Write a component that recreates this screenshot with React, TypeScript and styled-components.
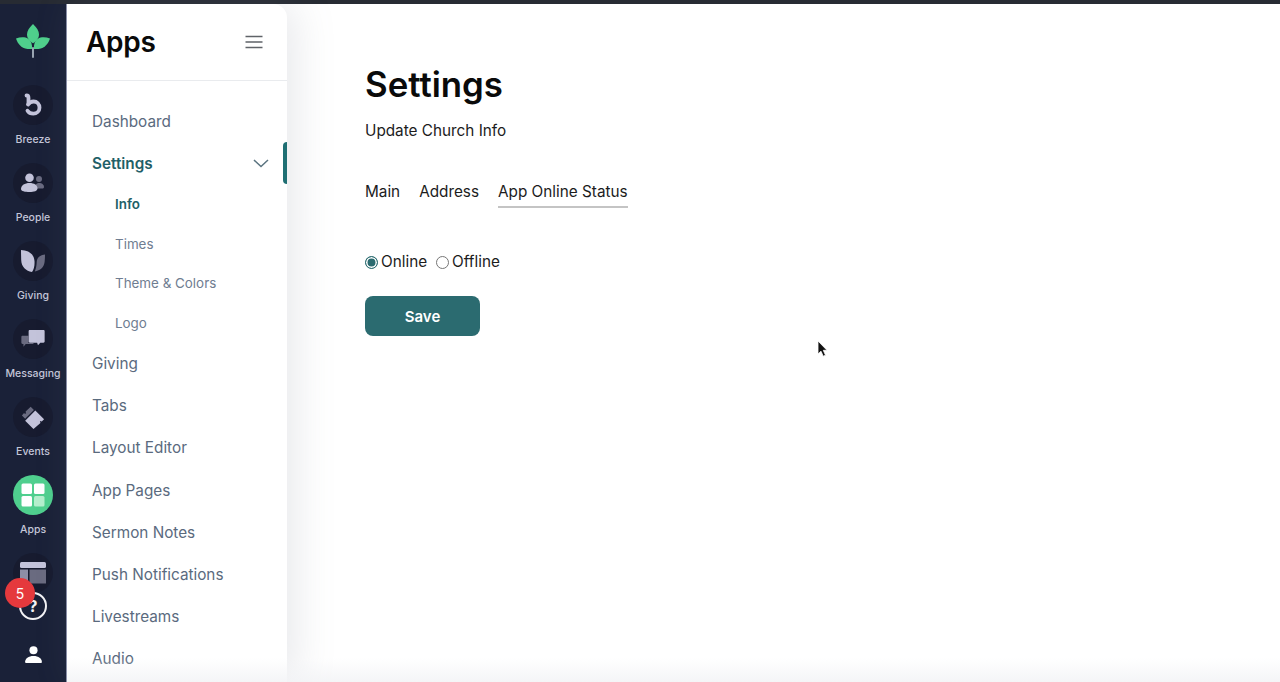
import React from "react";
import styled, { createGlobalStyle } from "styled-components";

const GlobalStyle = createGlobalStyle`
  html, body, #root {
    margin: 0;
    padding: 0;
    height: 100%;
  }
  body {
    font-family: Inter, "Liberation Sans", sans-serif;
    background: #ffffff;
    overflow: hidden;
  }
`;

const railItems = [
  { label: "Breeze", icon: "breeze" },
  { label: "People", icon: "people" },
  { label: "Giving", icon: "giving" },
  { label: "Messaging", icon: "messaging" },
  { label: "Events", icon: "events" },
  { label: "Apps", icon: "apps", active: true },
];

const navTop = ["Dashboard"];
const navSub = ["Info", "Times", "Theme & Colors", "Logo"];
const navRest = ["Giving", "Tabs", "Layout Editor", "App Pages", "Sermon Notes", "Push Notifications", "Livestreams", "Audio"];

const RailIcon = ({ name }: { name: string }) => {
  switch (name) {
    case "breeze":
      return (
        <svg width="24" height="26" viewBox="0 0 24 26" fill="none">
          <path d="M5.500 3.500C7 3.500 7.500 4.500 7.500 6v5" stroke="#c3c3da" strokeWidth="3.800" strokeLinecap="round" />
          <path d="M7 12.500c1.500-2 3.500-3 5.500-3 3.500 0 6 2.800 6 6.200s-2.800 6-6.200 6c-2.500 0-4.500-1-5.800-3" stroke="#c3c3da" strokeWidth="3.800" strokeLinecap="round" />
        </svg>
      );
    case "people":
      return (
        <svg width="24" height="20" viewBox="0 0 24 20">
          <circle cx="18" cy="6" r="3" fill="#6a6b80" />
          <path d="M13 15c.5-3.500 3-5 5.200-5 2.400 0 4.800 1.500 4.800 4 0 1-1 1.500-2 1.500h-8z" fill="#6a6b80" />
          <circle cx="8.500" cy="4.800" r="4.300" fill="#c3c3da" />
          <path d="M0 16c0-3.800 3.800-6 8.500-6s8 2.200 8 5.500c0 2.500-3.500 3.500-8 3.500S0 18.200 0 16z" fill="#c3c3da" />
        </svg>
      );
    case "giving":
      return (
        <svg width="24" height="24" viewBox="0 0 24 24">
          <path d="M0 1c7 .3 13 3.500 13.500 11 .3 5-.6 8.500-2.500 11C5 22 .4 18 .2 11 .1 7 0 4 0 1z" fill="#c3c3da" />
          <path d="M24 5.500c-5 .5-8 3-8.300 7.500-.2 3.500-.5 6-1.900 9.500 5.500-1 9-4 9.800-9.500.3-2.500.4-5 .4-7.500z" fill="#6a6b80" />
        </svg>
      );
    case "messaging":
      return (
        <svg width="24" height="20" viewBox="0 0 26 22">
          <path d="M1.500 7.500H8v8h6l-1 1H5l-2.500 3v-3H1.500c-.8 0-1.300-.5-1.300-1.300V8.800c0-.8.5-1.300 1.300-1.300z" fill="#6a6b80" />
          <path d="M9.500 1h15c.8 0 1.300.5 1.300 1.300v11.400c0 .8-.5 1.300-1.300 1.300H21l-2.500 2.800-1-2.800h-8c-.8 0-1.300-.5-1.300-1.300V2.300C8.200 1.500 8.700 1 9.500 1z" fill="#c3c3da" />
        </svg>
      );
    case "events":
      return (
        <svg width="24" height="24" viewBox="0 0 26 26">
          <path d="M10.500 2l3.500 3.500-9.500 9.500-3.500-3.500 2-2.500 2.500 .5-.5-2.500z" fill="#6a6b80" />
          <path d="M15.500 6l9.500 9.500-2.500 2.500-2-.6.600 2L13.500 26 4.500 17z" fill="#c3c3da" />
        </svg>
      );
    default:
      return (
        <svg width="26" height="26" viewBox="0 0 26 26">
          <rect x="1.500" y="1.500" width="10.500" height="10.500" rx="1.500" fill="#ffffff" />
          <rect x="14" y="1.500" width="10.500" height="10.500" rx="1.500" fill="#ffffff" />
          <rect x="1.500" y="14" width="10.500" height="10.500" rx="1.500" fill="#ffffff" />
          <rect x="14" y="14" width="10.500" height="10.500" rx="1.500" fill="#b5efcd" />
        </svg>
      );
  }
};

export default function App() {
  return (
    <>
      <GlobalStyle />
      <Page>
        <TopStrip />
        <Body>
          <Rail>
            <LogoWrap>
              <svg width="36" height="36" viewBox="0 0 36 36">
                <path d="M18 1c3.800 3.500 6 7 6 10.500 0 3.800-2.600 6.500-6 8.800-3.400-2.300-6-5-6-8.800C12 8 14.200 4.500 18 1z" fill="#4fd08c" />
                <path d="M1 15.500c4.500-1.700 9-1.700 12.200.2 2.800 1.700 4 5 4 10.300-4.500.3-8.200-.3-11-2.500C3.700 21.500 2 18.800 1 15.500z" fill="#4fd08c" />
                <path d="M35 15.500c-4.500-1.700-9-1.700-12.200.2-2.800 1.700-4 5-4 10.300 4.500.3 8.200-.3 11-2.500 2.500-2 4.200-4.700 5.200-8z" fill="#4fd08c" />
                <path d="M18 25v9" stroke="#a8b3bf" strokeWidth="1.800" strokeLinecap="round" />
              </svg>
            </LogoWrap>
            <RailList>
              {railItems.map((item) => (
                <RailItem key={item.label}>
                  <RailCircle $active={item.active}>
                    <RailIcon name={item.icon} />
                  </RailCircle>
                  <RailLabel $active={item.active}>{item.label}</RailLabel>
                </RailItem>
              ))}
              <RailItem>
                <RailCircle>
                  <svg width="26" height="22" viewBox="0 0 26 22">
                    <rect x="0" y="0" width="26" height="6" rx="1.500" fill="#c3c3da" />
                    <rect x="0" y="7.500" width="8" height="14" fill="#8d8ea6" />
                    <rect x="9.500" y="7.500" width="16.500" height="14" fill="#6a6b80" />
                  </svg>
                </RailCircle>
              </RailItem>
            </RailList>
            <RailFooter>
              <HelpButton>
                ?
                <Badge>5</Badge>
              </HelpButton>
              <svg width="17" height="17" viewBox="0 0 18 18">
                <circle cx="9" cy="4.500" r="4.300" fill="#ffffff" />
                <path d="M1 18c-.6 0-.9-.4-.9-1 0-3.800 3.600-6.500 8.900-6.500s8.900 2.700 8.900 6.500c0 .6-.3 1-.9 1z" fill="#ffffff" />
              </svg>
            </RailFooter>
          </Rail>

          <Sidebar>
            <SidebarHeader>
              <SidebarTitle>Apps</SidebarTitle>
              <svg width="18" height="14" viewBox="0 0 18 14" fill="none" stroke="#5f6368" strokeWidth="1.600">
                <path d="M0.500 1.500h17M0.500 7h17M0.500 12.500h17" />
              </svg>
            </SidebarHeader>
            <Nav>
              {navTop.map((item) => (
                <NavItem key={item}>{item}</NavItem>
              ))}
              <NavItem $active>
                Settings
                <svg width="16" height="9" viewBox="0 0 16 9" fill="none" stroke="#5b7480" strokeWidth="1.500">
                  <path d="M1 1l7 6.500L15 1" />
                </svg>
                <ActiveMark />
              </NavItem>
              <SubList>
                {navSub.map((item, i) => (
                  <SubItem key={item} $active={i === 0}>{item}</SubItem>
                ))}
              </SubList>
              {navRest.map((item) => (
                <NavItem key={item}>{item}</NavItem>
              ))}
            </Nav>
          </Sidebar>

          <Main>
            <Title>Settings</Title>
            <Subtitle>Update Church Info</Subtitle>
            <Tabs>
              <Tab>Main</Tab>
              <Tab>Address</Tab>
              <Tab $active>App Online Status</Tab>
            </Tabs>
            <RadioRow>
              <RadioOption>
                <RadioDot $checked />
                Online
              </RadioOption>
              <RadioOption>
                <RadioDot />
                Offline
              </RadioOption>
            </RadioRow>
            <SaveButton>Save</SaveButton>
            <Cursor width="12" height="18" viewBox="0 0 12 18">
              <path d="M1 1v13l3-2.800 2.200 5 2.300-1-2.200-4.900H10z" fill="#111" stroke="#fff" strokeWidth="0.800" />
            </Cursor>
          </Main>
        </Body>
        <BottomFade />
      </Page>
    </>
  );
}

const Page = styled.div`
  position: relative;
  width: 1280px;
  height: 682px;
  display: flex;
  flex-direction: column;
  overflow: hidden;
  background: #ffffff;
`;

const TopStrip = styled.div`
  height: 4px;
  flex: none;
  background: #272b33;
`;

const Body = styled.div`
  flex: 1;
  min-height: 0;
  display: flex;
`;

const Rail = styled.aside`
  position: relative;
  width: 67px;
  box-sizing: border-box;
  flex: none;
  background: #1a2138;
  border-right: 1px solid #8a8fa8;
  overflow: hidden;
`;

const LogoWrap = styled.div`
  height: 73px;
  display: flex;
  align-items: center;
  justify-content: center;
`;

const RailList = styled.div`
  display: flex;
  flex-direction: column;
  align-items: center;
  gap: 6px;
  padding-top: 8px;
`;

const RailItem = styled.div`
  display: flex;
  flex-direction: column;
  align-items: center;
  width: 100%;
  height: 72px;
`;

const RailCircle = styled.div<{ $active?: boolean }>`
  width: 40px;
  height: 40px;
  flex: none;
  border-radius: 50%;
  display: flex;
  align-items: center;
  justify-content: center;
  background: ${(p) => (p.$active ? "#4fcf8e" : "#171b2f")};
`;

const RailLabel = styled.span<{ $active?: boolean }>`
  margin-top: 8px;
  font-size: 10.500px;
  line-height: 13px;
  font-weight: 500;
  color: #c4c6d8;
  white-space: nowrap;
`;

const RailFooter = styled.div`
  position: absolute;
  left: 0;
  right: 0;
  bottom: 0;
  height: 90px;
  display: flex;
  flex-direction: column;
  align-items: center;
  gap: 26px;
  box-sizing: border-box;
`;

const HelpButton = styled.div`
  position: relative;
  width: 28px;
  height: 28px;
  box-sizing: border-box;
  border: 2px solid #f2f2f5;
  border-radius: 50%;
  display: flex;
  align-items: center;
  justify-content: center;
  color: #f2f2f5;
  font-size: 16px;
  font-weight: 700;
  background: #1a2138;
`;

const Badge = styled.span`
  position: absolute;
  left: -16px;
  top: -16px;
  width: 30px;
  height: 30px;
  border-radius: 50%;
  background: #e5393d;
  color: #ffffff;
  font-size: 14px;
  font-weight: 400;
  display: flex;
  align-items: center;
  justify-content: center;
`;

const Sidebar = styled.nav`
  position: relative;
  width: 220px;
  flex: none;
  background: #ffffff;
  border-top-right-radius: 14px;
  box-shadow: 8px 0 40px rgba(120, 125, 145, 0.18);
  z-index: 1;
  overflow: hidden;
`;

const SidebarHeader = styled.header`
  height: 77px;
  box-sizing: border-box;
  border-bottom: 1px solid #e9ebee;
  padding: 0 24px 0 19px;
  display: flex;
  align-items: center;
  justify-content: space-between;
`;

const SidebarTitle = styled.h2`
  margin: 0;
  font-size: 28px;
  line-height: 36px;
  font-weight: 600;
  color: #0a0a0a;
  letter-spacing: -0.3px;
`;

const Nav = styled.div`
  padding-top: 19px;
  display: flex;
  flex-direction: column;
`;

const NavItem = styled.div<{ $active?: boolean }>`
  position: relative;
  height: 42.200px;
  flex: none;
  padding: 0 18px 0 25px;
  display: flex;
  align-items: center;
  justify-content: space-between;
  font-size: 15.300px;
  font-weight: ${(p) => (p.$active ? 600 : 400)};
  color: ${(p) => (p.$active ? "#1f5f68" : "#5a6a7e")};
`;

const ActiveMark = styled.span`
  position: absolute;
  right: 0;
  top: 0;
  width: 4px;
  height: 42px;
  background: #1f6f73;
  border-radius: 4px 0 0 4px;
`;

const SubList = styled.div`
  display: flex;
  flex-direction: column;
`;

const SubItem = styled.div<{ $active?: boolean }>`
  height: 39.500px;
  padding-left: 48px;
  display: flex;
  align-items: center;
  font-size: 13.400px;
  font-weight: ${(p) => (p.$active ? 600 : 400)};
  color: ${(p) => (p.$active ? "#1f5f68" : "#6f7d91")};
`;

const Main = styled.main`
  position: relative;
  flex: 1;
  padding: 58px 0 0 78px;
  display: flex;
  flex-direction: column;
  align-items: flex-start;
`;

const Title = styled.h1`
  margin: 0;
  font-size: 34.800px;
  line-height: 44px;
  font-weight: 600;
  color: #0a0a0a;
`;

const Subtitle = styled.p`
  margin: 15px 0 0;
  font-size: 15.300px;
  line-height: 20px;
  color: #1c1c1c;
`;

const Tabs = styled.div`
  margin-top: 36px;
  display: flex;
  gap: 19px;
`;

const Tab = styled.div<{ $active?: boolean }>`
  padding: 5px 0 4px;
  font-size: 15.300px;
  line-height: 20px;
  color: #1c1c1c;
  border-bottom: 2px solid ${(p) => (p.$active ? "#c4c4c4" : "transparent")};
`;

const RadioRow = styled.div`
  margin-top: 44px;
  display: flex;
  gap: 9px;
`;

const RadioOption = styled.label`
  display: flex;
  align-items: center;
  gap: 3px;
  font-size: 15.300px;
  line-height: 20px;
  color: #1c1c1c;
`;

const RadioDot = styled.span<{ $checked?: boolean }>`
  width: 13px;
  height: 13px;
  box-sizing: border-box;
  border-radius: 50%;
  border: 1px solid ${(p) => (p.$checked ? "#2b6b70" : "#767676")};
  background: ${(p) => (p.$checked ? "#2b6b70" : "#fff")};
  box-shadow: ${(p) => (p.$checked ? "inset 0 0 0 1.500px #fff" : "none")};
`;

const SaveButton = styled.button`
  margin-top: 24px;
  width: 115px;
  height: 40px;
  border: 0;
  border-radius: 8px;
  background: #2b6b70;
  color: #ffffff;
  font-family: inherit;
  font-size: 15px;
  font-weight: 600;
`;

// the mouse pointer caught in the recording
const Cursor = styled.svg`
  position: absolute;
  left: 530px;
  top: 336px;
`;

const BottomFade = styled.div`
  position: absolute;
  left: 67px;
  right: 0;
  bottom: 0;
  height: 24px;
  background: linear-gradient(to bottom, rgba(240, 241, 244, 0), rgba(240, 241, 244, 0.7));
  z-index: 2;
  pointer-events: none;
`;
